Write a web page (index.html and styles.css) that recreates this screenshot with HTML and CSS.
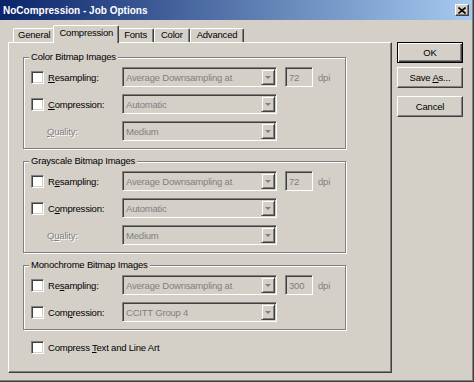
FILE: index.html
```html
<!DOCTYPE html>
<html lang="en">
<head>
    <meta charset="UTF-8">
    <title>NoCompression - Job Options</title>
    <link rel="stylesheet" href="styles.css">
</head>
<body>
    <div class="window">
        <div class="titlebar">
            <span class="title">NoCompression - Job Options</span>
            <span class="close">
                <svg width="8" height="7" viewBox="0 0 8 7"><path d="M0.5 0.5 L7.5 6.5 M7.5 0.5 L0.5 6.5" stroke="#000" stroke-width="1.6" fill="none"/></svg>
            </span>
        </div>
        <div class="body">
            <div class="main">
                <div class="tabs">
                    <div class="tab">General</div>
                    <div class="tab active">Compression</div>
                    <div class="tab">Fonts</div>
                    <div class="tab">Color</div>
                    <div class="tab">Advanced</div>
                </div>
                <div class="panel">
                    <fieldset class="group">
                        <legend>Color Bitmap Images</legend>
                        <div class="row">
                            <div class="opt"><span class="check-box"></span><span><u>R</u>esampling:</span></div>
                            <div class="select">Average Downsampling at<span class="arrow"></span></div>
                            <div class="field">72</div>
                            <span class="unit">dpi</span>
                        </div>
                        <div class="row">
                            <div class="opt"><span class="check-box"></span><span><u>C</u>ompression:</span></div>
                            <div class="select">Automatic<span class="arrow"></span></div>
                        </div>
                        <div class="row">
                            <div class="opt indent disabled"><span><u>Q</u>uality:</span></div>
                            <div class="select">Medium<span class="arrow"></span></div>
                        </div>
                    </fieldset>

                    <fieldset class="group">
                        <legend>Grayscale Bitmap Images</legend>
                        <div class="row">
                            <div class="opt"><span class="check-box"></span><span>R<u>e</u>sampling:</span></div>
                            <div class="select">Average Downsampling at<span class="arrow"></span></div>
                            <div class="field">72</div>
                            <span class="unit">dpi</span>
                        </div>
                        <div class="row">
                            <div class="opt"><span class="check-box"></span><span>C<u>o</u>mpression:</span></div>
                            <div class="select">Automatic<span class="arrow"></span></div>
                        </div>
                        <div class="row">
                            <div class="opt indent disabled"><span>Q<u>u</u>ality:</span></div>
                            <div class="select">Medium<span class="arrow"></span></div>
                        </div>
                    </fieldset>

                    <fieldset class="group">
                        <legend>Monochrome Bitmap Images</legend>
                        <div class="row">
                            <div class="opt"><span class="check-box"></span><span>Re<u>s</u>ampling:</span></div>
                            <div class="select">Average Downsampling at<span class="arrow"></span></div>
                            <div class="field">300</div>
                            <span class="unit">dpi</span>
                        </div>
                        <div class="row">
                            <div class="opt"><span class="check-box"></span><span>Com<u>p</u>ression:</span></div>
                            <div class="select">CCITT Group 4<span class="arrow"></span></div>
                        </div>
                    </fieldset>

                    <div class="row standalone">
                        <div class="opt wide"><span class="check-box"></span><span>Compress <u>T</u>ext and Line Art</span></div>
                    </div>
                </div>
            </div>
            <div class="buttons">
                <button class="btn default">OK</button>
                <button class="btn">Save <u>A</u>s...</button>
                <button class="btn cancel">Cancel</button>
            </div>
        </div>
    </div>
</body>
</html>
```

FILE: styles.css
```css
* {
    box-sizing: border-box;
}
html, body {
    margin: 0;
    padding: 0;
}
body {
    background: #d4d0c8;
    font-family: "Liberation Sans", Arial, sans-serif;
    font-size: 9.5px;
    letter-spacing: -0.2px;
    color: #000;
}
.window {
    width: 474px;
    height: 382px;
    border-right: 1px solid #404040;
    border-bottom: 1px solid #404040;
    box-shadow: inset -1px -1px #808080;
}
.titlebar {
    height: 20px;
    width: 472px;
    display: flex;
    align-items: center;
    justify-content: space-between;
    padding: 0 3px;
    background: linear-gradient(to right, #0a246a, #a6caf0);
    color: #fff;
    font-weight: bold;
    font-size: 10px;
    letter-spacing: 0;
}
.close {
    width: 14px;
    height: 12px;
    display: flex;
    align-items: center;
    justify-content: center;
    background: #d4d0c8;
    border: 1px solid;
    border-color: #fff #404040 #404040 #fff;
    box-shadow: inset -1px -1px #808080;
}
.body {
    display: flex;
    padding: 5px 0 0 8px;
}
.main {
    width: 384px;
}
.tabs {
    display: flex;
    align-items: flex-end;
    height: 17px;
    padding-left: 5px;
}
.tab {
    height: 14px;
    padding: 0 6px;
    line-height: 12px;
    border: 1px solid;
    border-bottom: 0;
    border-color: #fff #404040 transparent #fff;
    border-radius: 2px 2px 0 0;
    box-shadow: inset -1px 0 #808080;
}
.tab:first-child {
    padding: 0 4px;
}
.tab.active {
    height: 18px;
    margin: 0 -2px -1px;
    padding: 1px 5px 0;
    position: relative;
    z-index: 1;
    background: #d4d0c8;
}
.panel {
    height: 331px;
    border: 1px solid;
    border-color: #fff #404040 #404040 #fff;
    box-shadow: inset -1px -1px #808080;
    padding: 8px 0 0 14px;
}
.group {
    margin: 0;
    width: 323px;
    min-width: 0;
    padding: 4px 0 7px 7px;
    border: 1px solid #808080;
    box-shadow: inset 1px 1px #fff, 1px 1px #fff;
}
.group + .group {
    margin-top: 6px;
}
legend {
    padding: 0 2px;
    margin-left: -2px;
    line-height: 12px;
    background: #d4d0c8;
}
.row {
    display: flex;
    align-items: center;
    height: 20px;
}
.row + .row {
    margin-top: 7px;
}
.opt {
    width: 91px;
    display: flex;
    align-items: center;
    gap: 4px;
}
.opt.indent {
    padding-left: 16px;
}
.opt.wide {
    width: auto;
}
.disabled {
    color: #808080;
    text-shadow: 1px 1px #fff;
}
.check-box {
    width: 13px;
    height: 13px;
    flex: none;
    background: #fff;
    border: 1px solid;
    border-color: #808080 #fff #fff #808080;
    box-shadow: inset 1px 1px #404040, inset -1px -1px #d4d0c8;
}
.select, .field {
    height: 20px;
    display: flex;
    align-items: center;
    padding-left: 3px;
    color: #808080;
    border: 1px solid;
    border-color: #808080 #fff #fff #808080;
    box-shadow: inset 1px 1px #404040, inset -1px -1px #d4d0c8;
}
.select {
    width: 155px;
    justify-content: space-between;
}
.arrow {
    width: 14px;
    height: 16px;
    margin-right: 1px;
    display: flex;
    align-items: center;
    justify-content: center;
    border: 1px solid;
    border-color: #d4d0c8 #404040 #404040 #d4d0c8;
    box-shadow: inset 1px 1px #fff, inset -1px -1px #808080;
}
.arrow::after {
    content: "";
    border-top: 3px solid #808080;
    border-left: 3px solid transparent;
    border-right: 3px solid transparent;
}
.field {
    width: 28px;
    margin-left: 8px;
}
.unit {
    margin-left: 5px;
    color: #808080;
}
.standalone {
    margin-top: 7px;
    padding-left: 8px;
}
.buttons {
    display: flex;
    flex-direction: column;
    width: 66px;
    margin: 17px 0 0 5px;
}
.btn {
    height: 21px;
    padding: 0;
    font: inherit;
    letter-spacing: inherit;
    color: #000;
    background: #d4d0c8;
    border: 1px solid;
    border-color: #fff #404040 #404040 #fff;
    box-shadow: inset -1px -1px #808080;
}
.btn + .btn {
    margin-top: 4px;
}
.btn.cancel {
    margin-top: 8px;
}
.btn.default {
    border-color: #000;
    box-shadow: inset 1px 1px #fff, inset -1px -1px #404040, inset -2px -2px #808080;
}
```
